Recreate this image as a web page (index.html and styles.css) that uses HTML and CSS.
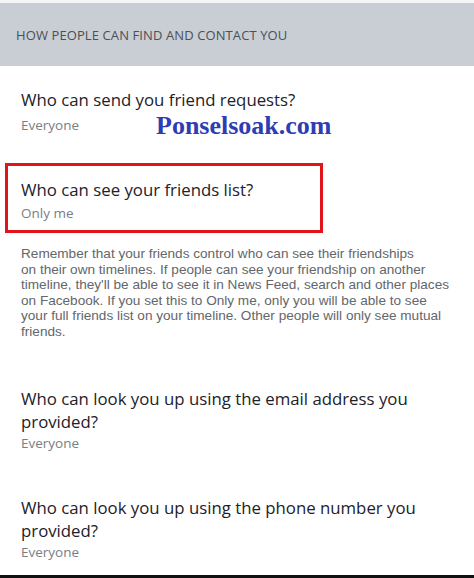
FILE: index.html
```html
<!DOCTYPE html>
<html>
<head>
<meta charset="utf-8">
<link rel="stylesheet" href="styles.css">
</head>
<body>
<div class="page">
  <div class="topstrip"></div>
  <div class="section-header">HOW PEOPLE CAN FIND AND CONTACT YOU</div>
  <div class="item first">
    <div class="title">Who can send you friend requests?</div>
    <div class="value">Everyone</div>
    <div class="watermark">Ponselsoak.com</div>
  </div>
  <div class="item highlight">
    <div class="title">Who can see your friends list?</div>
    <div class="value">Only me</div>
  </div>
  <p class="note">Remember that your friends control who can see their friendships<br>on their own timelines. If people can see your friendship on another<br>timeline, they'll be able to see it in News Feed, search and other places<br>on Facebook. If you set this to Only me, only you will be able to see<br>your full friends list on your timeline. Other people will only see mutual<br>friends.</p>
  <div class="item multi email">
    <div class="title">Who can look you up using the email address you<br>provided?</div>
    <div class="value">Everyone</div>
  </div>
  <div class="item multi phone">
    <div class="title">Who can look you up using the phone number you<br>provided?</div>
    <div class="value">Everyone</div>
  </div>
  <div class="bottombar"></div>
</div>
</body>
</html>
```
FILE: styles.css
```css
html, body {
  margin: 0;
  padding: 0;
  background: #ffffff;
  overflow: hidden;
}
.page {
  width: 100%;
  height: 578px;
  display: flex;
  flex-direction: column;
  font-family: "Open Sans", "DejaVu Sans", sans-serif;
  overflow: hidden;
  position: relative;
}
.topstrip {
  height: 3px;
  background: #f4f5f6;
}
.section-header {
  height: 63px;
  background: #c9ced5;
  color: #4b4f56;
  font-size: 13px;
  display: flex;
  align-items: center;
  padding-left: 16px;
  letter-spacing: 0.1px;
}
.item {
  padding-left: 21px;
  position: relative;
}
.title {
  font-size: 16.8px;
  line-height: 22px;
  color: #1d2129;
  white-space: nowrap;
}
.value {
  font-size: 13.5px;
  line-height: 20px;
  color: #7a7d82;
}
.item.first {
  padding-top: 23px;
}
.item.first .value {
  margin-top: 4px;
}
.watermark {
  position: absolute;
  left: 156px;
  top: 45px;
  font-family: "Liberation Serif", serif;
  font-weight: bold;
  font-size: 26px;
  line-height: 30px;
  color: #2f3db5;
}
.item.highlight {
  margin-top: 28px;
  margin-left: 5px;
  width: 299px;
  border: 3px solid #e1141a;
  padding: 13px 0 7px 13px;
}
.item.highlight .value {
  margin-top: 2px;
}
.note {
  margin: 13px 0 0 0;
  padding: 0 0 0 21px;
  font-family: "Liberation Sans", Arial, sans-serif;
  font-size: 13.6px;
  line-height: 15.6px;
  color: #63666b;
  white-space: nowrap;
}
.item.multi .title {
  line-height: 23px;
}
.item.email {
  margin-top: 47px;
}
.item.phone {
  margin-top: 43px;
}
.bottombar {
  margin-top: auto;
  height: 3px;
  background: #111111;
}
```
